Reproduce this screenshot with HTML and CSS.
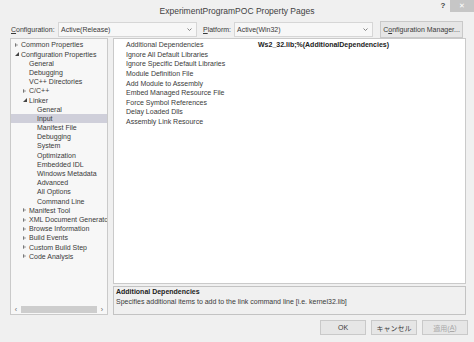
FILE: index.html
```html
<!DOCTYPE html>
<html>

<head>
    <meta charset="UTF-8">
    <link rel="stylesheet" href="styles.css">
    <title>ExperimentProgramPOC Property Pages</title>
</head>

<body>
    <div class="titlebar">
        <div></div>
        <div class="title">ExperimentProgramPOC Property Pages</div>
        <div class="caption">
            <div class="help">?</div>
            <div class="close">&#x2715;</div>
        </div>
    </div>

    <div class="config-row">
        <span class="label label-config"><u>C</u>onfiguration:</span>
        <div class="combo">
            <span>Active(Release)</span>
            <svg class="chev" width="5" height="3" viewBox="0 0 5 3"><path d="M0.5 0.5 L2.5 2.5 L4.5 0.5" fill="none" stroke="#777" stroke-width="0.9"/></svg>
        </div>
        <span class="label label-platform"><u>P</u>latform:</span>
        <div class="combo">
            <span>Active(Win32)</span>
            <svg class="chev" width="5" height="3" viewBox="0 0 5 3"><path d="M0.5 0.5 L2.5 2.5 L4.5 0.5" fill="none" stroke="#777" stroke-width="0.9"/></svg>
        </div>
        <div class="btn btn-manager">C<u>o</u>nfiguration Manager...</div>
    </div>

    <div class="main">
        <div class="tree">
            <div class="tree-items">
                <div class="node l0"><i class="tw closed"></i>Common Properties</div>
                <div class="node l0"><i class="tw open"></i>Configuration Properties</div>
                <div class="node l1"><i class="tw"></i>General</div>
                <div class="node l1"><i class="tw"></i>Debugging</div>
                <div class="node l1"><i class="tw"></i>VC++ Directories</div>
                <div class="node l1"><i class="tw closed"></i>C/C++</div>
                <div class="node l1"><i class="tw open"></i>Linker</div>
                <div class="node l2"><i class="tw"></i>General</div>
                <div class="node l2 selected"><i class="tw"></i>Input</div>
                <div class="node l2"><i class="tw"></i>Manifest File</div>
                <div class="node l2"><i class="tw"></i>Debugging</div>
                <div class="node l2"><i class="tw"></i>System</div>
                <div class="node l2"><i class="tw"></i>Optimization</div>
                <div class="node l2"><i class="tw"></i>Embedded IDL</div>
                <div class="node l2"><i class="tw"></i>Windows Metadata</div>
                <div class="node l2"><i class="tw"></i>Advanced</div>
                <div class="node l2"><i class="tw"></i>All Options</div>
                <div class="node l2"><i class="tw"></i>Command Line</div>
                <div class="node l1"><i class="tw closed"></i>Manifest Tool</div>
                <div class="node l1"><i class="tw closed"></i>XML Document Generator</div>
                <div class="node l1"><i class="tw closed"></i>Browse Information</div>
                <div class="node l1"><i class="tw closed"></i>Build Events</div>
                <div class="node l1"><i class="tw closed"></i>Custom Build Step</div>
                <div class="node l1"><i class="tw closed"></i>Code Analysis</div>
            </div>
            <div class="hscroll">
                <span class="arrow">&#x2039;</span>
                <span class="thumb"></span>
                <span class="arrow">&#x203A;</span>
            </div>
        </div>

        <div class="right">
            <div class="grid">
                <div class="prop"><span class="name">Additional Dependencies</span><span class="value">Ws2_32.lib;%(AdditionalDependencies)</span></div>
                <div class="prop"><span class="name">Ignore All Default Libraries</span><span class="value"></span></div>
                <div class="prop"><span class="name">Ignore Specific Default Libraries</span><span class="value"></span></div>
                <div class="prop"><span class="name">Module Definition File</span><span class="value"></span></div>
                <div class="prop"><span class="name">Add Module to Assembly</span><span class="value"></span></div>
                <div class="prop"><span class="name">Embed Managed Resource File</span><span class="value"></span></div>
                <div class="prop"><span class="name">Force Symbol References</span><span class="value"></span></div>
                <div class="prop"><span class="name">Delay Loaded Dlls</span><span class="value"></span></div>
                <div class="prop"><span class="name">Assembly Link Resource</span><span class="value"></span></div>
            </div>
            <div class="desc">
                <div class="desc-title">Additional Dependencies</div>
                <div>Specifies additional items to add to the link command line [i.e. kernel32.lib]</div>
            </div>
        </div>
    </div>

    <div class="footer">
        <div class="btn">OK</div>
        <div class="btn">キャンセル</div>
        <div class="btn disabled">適用(<u>A</u>)</div>
    </div>
</body>

</html>
```

FILE: styles.css
```css
* {
    box-sizing: border-box;
}

html,
body {
    margin: 0;
}

body {
    width: 474px;
    height: 342px;
    overflow: hidden;
    background: #f0f0f0;
    font-family: "Liberation Sans", "Noto Sans CJK JP", sans-serif;
    font-size: 7px;
    color: #3a3a3a;
}

/* title bar */
.titlebar {
    height: 20px;
    display: grid;
    grid-template-columns: 1fr auto 1fr;
}

.title {
    align-self: center;
    padding-top: 1px;
    font-size: 8.5px;
    color: #3f3f3f;
}

.caption {
    justify-self: end;
    display: flex;
    align-items: flex-start;
}

.help {
    width: 14px;
    height: 12px;
    line-height: 12px;
    text-align: center;
    font-size: 8px;
    font-weight: bold;
    color: #444;
}

.close {
    width: 24px;
    height: 12px;
    line-height: 12px;
    text-align: center;
    font-size: 7px;
    color: #fff;
    background: #c6c6c6;
}

/* configuration row */
.config-row {
    height: 18px;
    display: flex;
    align-items: center;
    padding-left: 11px;
}

.label-config {
    width: 47px;
}

.label-platform {
    width: 31px;
    margin-left: 6px;
}

.combo {
    width: 139px;
    height: 15px;
    display: flex;
    align-items: center;
    justify-content: space-between;
    padding: 0 4px 0 2px;
    background: #f7f7f7;
    border: 1px solid #d6d6d6;
}

.btn {
    height: 15px;
    width: 46px;
    display: flex;
    align-items: center;
    justify-content: center;
    background: #e6e6e6;
    border: 1px solid #c9c9c9;
}

.btn-manager {
    width: 83px;
    height: 17px;
    margin-left: 7px;
}

.btn.disabled {
    color: #a8a8a8;
}

/* main area */
.main {
    height: 278px;
    display: flex;
    padding-left: 10px;
}

.tree {
    width: 98px;
    height: 277px;
    display: flex;
    flex-direction: column;
    overflow: hidden;
    background: #f7f7f7;
    border: 1px solid #cacaca;
}

.tree-items {
    padding-top: 1.4px;
}

.node {
    height: 9.2px;
    line-height: 9.2px;
    display: flex;
    align-items: center;
    white-space: nowrap;
}

.node.l0 {
    padding-left: 4px;
}

.node.l1 {
    padding-left: 12px;
}

.node.l2 {
    padding-left: 20px;
}

.node.selected {
    background: #cfcfda;
}

.tw {
    width: 6px;
    height: 6px;
    flex: none;
    position: relative;
}

.tw.closed::before {
    content: "";
    position: absolute;
    left: 0;
    top: 1px;
    border-left: 3px solid #777;
    border-top: 2px solid transparent;
    border-bottom: 2px solid transparent;
}

.tw.closed::after {
    content: "";
    position: absolute;
    left: 0.8px;
    top: 2.1px;
    border-left: 1.5px solid #f7f7f7;
    border-top: 0.9px solid transparent;
    border-bottom: 0.9px solid transparent;
}

.tw.open::before {
    content: "";
    position: absolute;
    left: 0;
    top: 1px;
    border-right: 4px solid #444;
    border-top: 4px solid transparent;
}

.hscroll {
    margin-top: auto;
    margin-bottom: 1px;
    height: 7px;
    display: flex;
    align-items: center;
}

.hscroll .arrow {
    width: 10px;
    text-align: center;
    font-size: 7px;
    line-height: 7px;
    color: #666;
}

.hscroll .thumb {
    width: 76px;
    height: 7px;
    background: #cdcdcd;
}

.right {
    width: 353px;
    margin-left: 5px;
    display: flex;
    flex-direction: column;
}

.grid {
    height: 246px;
    padding-top: 1.2px;
    background: #fff;
    border: 1px solid #cacaca;
}

.prop {
    height: 9.6px;
    line-height: 9.6px;
    display: flex;
    white-space: nowrap;
}

.prop .name {
    width: 144px;
    padding-left: 12px;
}

.prop .value {
    font-weight: bold;
    color: #222;
}

.desc {
    height: 29px;
    margin-top: 2px;
    padding-left: 2px;
    line-height: 10px;
    background: #f0f0f0;
    border: 1px solid #c3c3c3;
}

.desc-title {
    font-weight: bold;
    color: #222;
}

/* dialog buttons */
.footer {
    display: flex;
    justify-content: flex-end;
    gap: 5px;
    padding: 4px 6px 0 0;
}
```
